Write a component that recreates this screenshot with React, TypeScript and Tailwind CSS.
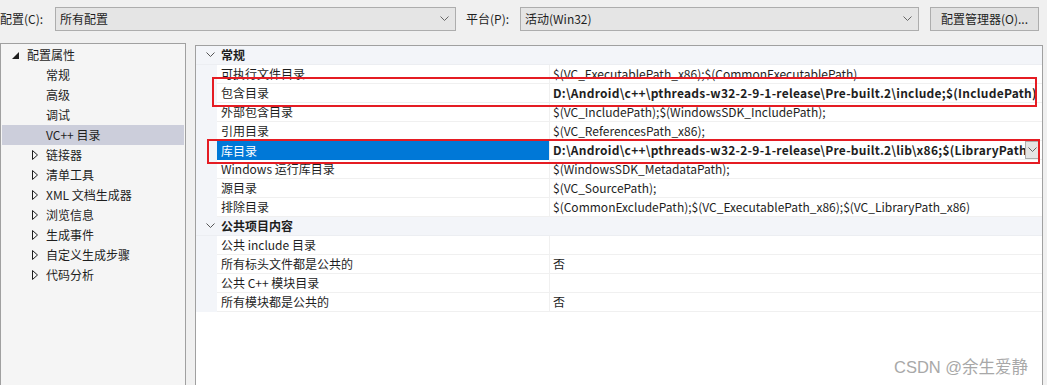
const FONT = "font-['Segoe_UI','Noto_Sans_CJK_SC',sans-serif]"

function Chevron({ className = '' }: { className?: string }) {
  return (
    <svg width="9" height="6" viewBox="0 0 9 6" className={className}>
      <path d="M0.5 0.5 L4.5 4.5 L8.5 0.5" fill="none" stroke="currentColor" strokeWidth="1" />
    </svg>
  )
}

function Combo({ text, width }: { text: string; width: string }) {
  return (
    <div className={`${width} h-[24px] flex items-center justify-between pl-[4px] pr-[6px] bg-[#e5e5e5] border border-[#adadad]`}>
      <span>{text}</span>
      <Chevron className="text-[#666]" />
    </div>
  )
}

const treeItems: { label: string; leaf: boolean; selected?: boolean }[] = [
  { label: '常规', leaf: true },
  { label: '高级', leaf: true },
  { label: '调试', leaf: true },
  { label: 'VC++ 目录', leaf: true, selected: true },
  { label: '链接器', leaf: false },
  { label: '清单工具', leaf: false },
  { label: 'XML 文档生成器', leaf: false },
  { label: '浏览信息', leaf: false },
  { label: '生成事件', leaf: false },
  { label: '自定义生成步骤', leaf: false },
  { label: '代码分析', leaf: false },
]

type Row =
  | { kind: 'header'; label: string }
  | { kind: 'prop'; label: string; value: string; bold?: boolean; selected?: boolean }

const rows: Row[] = [
  { kind: 'header', label: '常规' },
  { kind: 'prop', label: '可执行文件目录', value: '$(VC_ExecutablePath_x86);$(CommonExecutablePath)' },
  { kind: 'prop', label: '包含目录', value: 'D:\\Android\\c++\\pthreads-w32-2-9-1-release\\Pre-built.2\\include;$(IncludePath)', bold: true },
  { kind: 'prop', label: '外部包含目录', value: '$(VC_IncludePath);$(WindowsSDK_IncludePath);' },
  { kind: 'prop', label: '引用目录', value: '$(VC_ReferencesPath_x86);' },
  { kind: 'prop', label: '库目录', value: 'D:\\Android\\c++\\pthreads-w32-2-9-1-release\\Pre-built.2\\lib\\x86;$(LibraryPath)', bold: true, selected: true },
  { kind: 'prop', label: 'Windows 运行库目录', value: '$(WindowsSDK_MetadataPath);' },
  { kind: 'prop', label: '源目录', value: '$(VC_SourcePath);' },
  { kind: 'prop', label: '排除目录', value: '$(CommonExcludePath);$(VC_ExecutablePath_x86);$(VC_LibraryPath_x86)' },
  { kind: 'header', label: '公共项目内容' },
  { kind: 'prop', label: '公共 include 目录', value: '' },
  { kind: 'prop', label: '所有标头文件都是公共的', value: '否' },
  { kind: 'prop', label: '公共 C++ 模块目录', value: '' },
  { kind: 'prop', label: '所有模块都是公共的', value: '否' },
]

export default function App() {
  return (
    <div className={`${FONT} relative w-[1047px] h-[385px] overflow-hidden bg-[#f0f0f0] text-[12px] text-[#1e1e1e] leading-[16px]`}>
      {/* Top toolbar */}
      <div className="flex items-center h-[24px] mt-[7px]">
        <span className="w-[55px]">配置(C):</span>
        <Combo text="所有配置" width="w-[401px]" />
        <span className="ml-[10px] w-[54px]">平台(P):</span>
        <Combo text="活动(Win32)" width="w-[399px]" />
        <button className="ml-[11px] w-[109px] h-[24px] bg-[#e1e1e1] border border-[#adadad]">配置管理器(O)...</button>
      </div>

      <div className="flex mt-[12px] h-[400px]">
        {/* Tree */}
        <div className="w-[186px] shrink-0 bg-[#f5f5f5] border border-[#a0a0a0] pt-[1px] px-[1px]">
          <div className="h-[20px] flex items-center">
            <svg width="7" height="7" viewBox="0 0 7 7" className="ml-[10px] mr-[8px]">
              <polygon points="7,0 7,7 0,7" fill="#1e1e1e" />
            </svg>
            <span>配置属性</span>
          </div>
          {treeItems.map((t) => (
            <div key={t.label} className={`h-[20px] flex items-center ${t.selected ? 'bg-[#cccedb]' : ''}`}>
              {t.leaf ? (
                <span className="w-[44px]" />
              ) : (
                <span className="w-[44px] flex">
                  <svg width="6" height="10" viewBox="0 0 6 10" className="ml-[30px]">
                    <polygon points="0.5,0.5 5.5,5 0.5,9.5" fill="none" stroke="#1e1e1e" strokeWidth="1" />
                  </svg>
                </span>
              )}
              <span>{t.label}</span>
            </div>
          ))}
        </div>

        {/* Property grid */}
        <div className="ml-[9px] mt-[2px] w-[848px] shrink-0 bg-white border border-[#a0a0a0]">
          {rows.map((r, i) =>
            r.kind === 'header' ? (
              <div key={i} className="h-[19px] flex items-center bg-[#f3f5f9] border-b border-[#eceef2]">
                <span className="w-[25px] flex justify-center pl-[3px] text-[#555]">
                  <Chevron />
                </span>
                <span className="font-bold">{r.label}</span>
              </div>
            ) : (
              <div key={i} className="h-[19px] flex">
                <div className="w-[21px] shrink-0 bg-[#f3f5f9]" />
                <div className="flex flex-1 min-w-0 border-b border-[#f0f0f0]">
                  <div className={`w-[332px] shrink-0 pl-[4px] flex items-center ${r.selected ? 'bg-[#0078d7] text-white mb-[-1px]' : ''}`}>
                    {r.label}
                  </div>
                  <div className="w-[1px] shrink-0 bg-[#f0f0f0]" />
                  <div className="flex-1 min-w-0 flex items-center pl-[3px] overflow-hidden">
                    <span className={`flex-1 min-w-0 whitespace-nowrap overflow-hidden leading-[18px] ${r.bold ? 'font-bold tracking-[0.25px]' : ''}`}>{r.value}</span>
                    {r.selected && (
                      <span className="w-[15px] h-[18px] shrink-0 mr-[2px] flex items-center justify-center bg-[#e5e5e5] border border-[#adadad] text-[#666]">
                        <Chevron />
                      </span>
                    )}
                  </div>
                </div>
              </div>
            )
          )}
        </div>
      </div>

      {/* Red annotation boxes */}
      <div className="absolute left-[212px] top-[77px] w-[825px] h-[30px] border-2 border-[#e51c23]" />
      <div className="absolute left-[207px] top-[139px] w-[833px] h-[25px] border-2 border-[#e51c23]" />

      {/* Watermark */}
      <div className="absolute left-[894px] top-[359px] text-[16.5px] text-[#a8a8a8] font-['Liberation_Sans','Noto_Sans_CJK_SC',sans-serif]">
        CSDN @余生爱静
      </div>
    </div>
  )
}
